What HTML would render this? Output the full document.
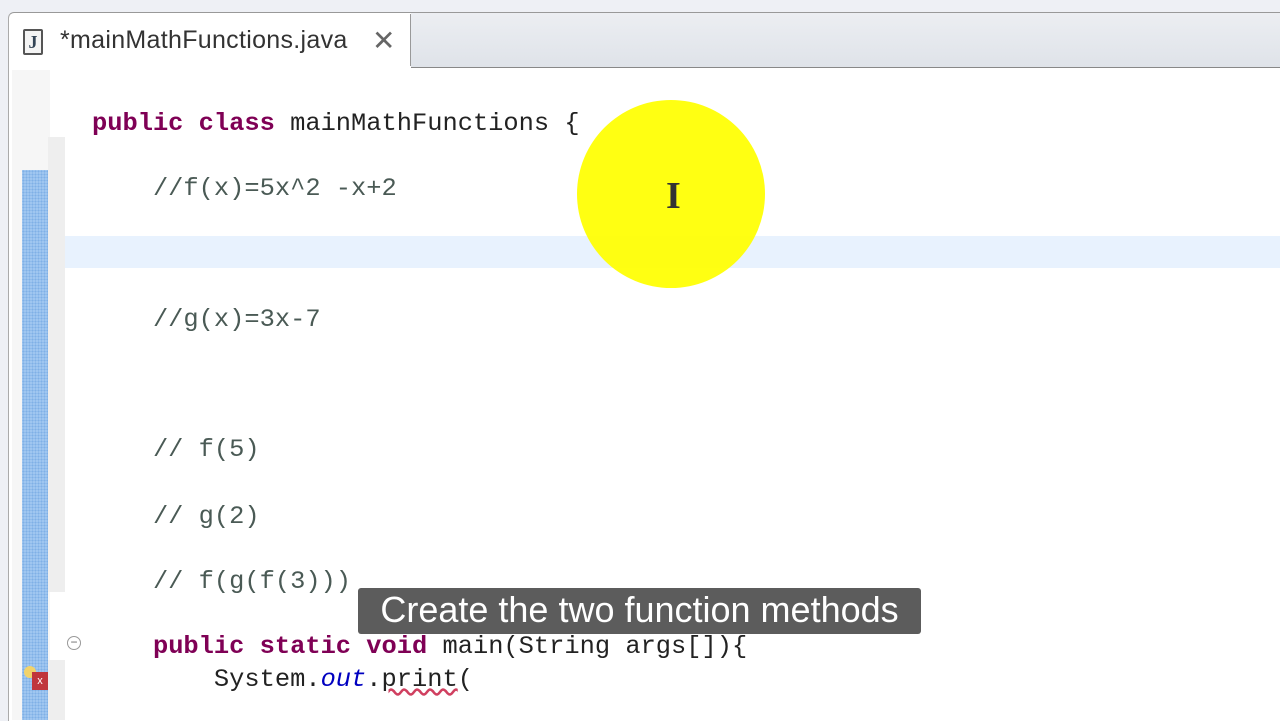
<!DOCTYPE html>
<html><head><meta charset="utf-8"><style>
body{margin:0;width:1280px;height:720px;overflow:hidden;background:#eef0f5;position:relative;font-family:"Liberation Sans",sans-serif}
.a{position:absolute}
.code{position:absolute;font-family:"Liberation Mono",monospace;font-size:25.4px;white-space:pre;color:#222;line-height:32px}
.k{color:#7f0055;font-weight:bold}
.c{color:#4a5a55}
</style></head><body>
<div class="a" style="left:8px;top:12px;width:1272px;height:708px;background:#fff;border-left:1px solid #aaa;border-top:1px solid #999;border-radius:6px 0 0 0"></div>
<div class="a" style="left:411px;top:12px;width:869px;height:54px;background:linear-gradient(#eceef2,#dfe3e9);border-top:1px solid #999;border-bottom:1px solid #888"></div>
<div class="a" style="left:410px;top:14px;width:1px;height:52px;background:#999"></div>
<div class="a" style="left:23px;top:29px;width:20px;height:26px;border:2px solid #555;border-radius:2px;background:#f4f4f4;box-sizing:border-box;font:bold 18px 'Liberation Serif';color:#345;text-align:center;line-height:22px">J</div>
<div class="a" style="left:60px;top:26px;font-size:25px;letter-spacing:0.3px;color:#333">*mainMathFunctions.java</div>
<div class="a" style="left:372px;top:24px;font-size:28px;color:#666">✕</div>
<div class="a" style="left:12px;top:70px;width:38px;height:650px;background:#f6f6f6"></div>
<div class="a" style="left:22px;top:170px;width:26px;height:550px;background:#9fc6f0;background-image:radial-gradient(#7fb0e6 1px,transparent 1px);background-size:3px 3px"></div>
<div class="a" style="left:48px;top:137px;width:17px;height:455px;background:#eeeeee"></div>
<div class="a" style="left:48px;top:660px;width:17px;height:60px;background:#eeeeee"></div>
<div class="a" style="left:65px;top:236px;width:1215px;height:32px;background:#e8f2fe"></div>
<div class="a" style="left:67px;top:636px;width:14px;height:14px;border:1px solid #999;border-radius:50%;box-sizing:border-box;font-size:12px;line-height:11px;text-align:center;color:#666">−</div>
<div class="a" style="left:24px;top:666px;width:12px;height:12px;border-radius:50%;background:#f2d36a"></div>
<div class="a" style="left:32px;top:672px;width:16px;height:18px;background:#c0363c;color:#fff;font-size:11px;text-align:center;line-height:18px">x</div>
<div class="code" style="left:92px;top:108px"><span class="k">public</span> <span class="k">class</span> mainMathFunctions {</div>
<div class="code c" style="left:92px;top:173px">    //f(x)=5x^2 -x+2</div>
<div class="code c" style="left:92px;top:304px">    //g(x)=3x-7</div>
<div class="code c" style="left:92px;top:434px">    // f(5)</div>
<div class="code c" style="left:92px;top:501px">    // g(2)</div>
<div class="code c" style="left:92px;top:566px">    // f(g(f(3)))</div>
<div class="code" style="left:92px;top:631px">    <span class="k">public</span> <span class="k">static</span> <span class="k">void</span> main(String args[]){</div>
<div class="code" style="left:92px;top:664px">        System.<i style="color:#0000c0">out</i>.<span style="text-decoration:underline wavy #d04060">print</span>(</div>
<div class="a" style="left:577px;top:100px;width:188px;height:188px;border-radius:50%;background:rgba(255,255,0,0.93)"></div>
<div class="a" style="left:666px;top:176px;font:bold 38px 'Liberation Serif';color:#333;line-height:40px">I</div>
<div class="a" style="left:358px;top:588px;width:563px;height:46px;background:rgba(70,70,70,0.88);border-radius:3px;color:#fff;font-size:36px;line-height:44px;text-align:center;white-space:nowrap">Create the two function methods</div>
</body></html>
